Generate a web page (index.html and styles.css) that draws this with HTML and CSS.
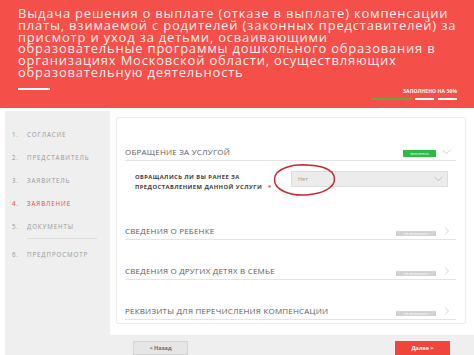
FILE: index.html
```html
<!DOCTYPE html>
<html lang="ru">
<head>
  <meta charset="UTF-8">
  <title>Заявление</title>
  <link rel="stylesheet" href="styles.css">
</head>
<body>

  <!-- Header -->
  <header class="hero">
    <h1>Выдача решения о выплате (отказе в выплате) компенсации<br>платы, взимаемой с родителей (законных представителей) за<br>присмотр и уход за детьми, осваивающими<br>образовательные программы дошкольного образования в<br>организациях Московской области, осуществляющих<br>образовательную деятельность</h1>
    <div class="hero-bottom">
      <div class="hero-line"></div>
      <div class="progress">
        <div class="progress-label">ЗАПОЛНЕНО НА 50%</div>
        <div class="progress-bars">
          <span class="bar done"></span>
          <span class="bar"></span>
          <span class="bar"></span>
        </div>
      </div>
    </div>
  </header>

  <div class="layout">
    <!-- Steps -->
    <aside class="steps">
      <div class="step"><span class="num">1.</span>СОГЛАСИЕ</div>
      <div class="step"><span class="num">2.</span>ПРЕДСТАВИТЕЛЬ</div>
      <div class="step"><span class="num">3.</span>ЗАЯВИТЕЛЬ</div>
      <div class="step active"><span class="num">4.</span>ЗАЯВЛЕНИЕ</div>
      <div class="step"><span class="num">5.</span>ДОКУМЕНТЫ</div>
      <div class="steps-divider"></div>
      <div class="step last"><span class="num">6.</span>ПРЕДПРОСМОТР</div>
    </aside>

    <main class="content">
      <div class="card">
        <div class="section first">
          <div class="section-head">
            <span class="section-title">ОБРАЩЕНИЕ ЗА УСЛУГОЙ</span>
            <span class="badge green">заполнено</span>
            <svg class="chev" width="9" height="6" viewBox="0 0 9 6"><path d="M0.5 1 L4.5 4.5 L8.5 1" fill="none" stroke="#c8c8c8" stroke-width="0.8"/></svg>
          </div>
          <div class="field">
            <div class="field-label">ОБРАЩАЛИСЬ ЛИ ВЫ РАНЕЕ ЗА<br>ПРЕДОСТАВЛЕНИЕМ ДАННОЙ УСЛУГИ <span class="req">*</span></div>
            <div class="select">
              <span>Нет</span>
              <svg width="9" height="6" viewBox="0 0 9 6"><path d="M0.5 1 L4.5 4.5 L8.5 1" fill="none" stroke="#b5b5b5" stroke-width="0.8"/></svg>
            </div>
            <svg class="circle" width="66" height="36" viewBox="0 0 66 36">
              <path d="M40 3.5 C22 1 3 6 2.5 17 C2 28 18 34 34 33 C50 32 63 26 62.5 16.5 C62 7 48 2.5 30 3" fill="none" stroke="#c32a2f" stroke-width="1.5"/>
            </svg>
          </div>
        </div>

        <div class="section">
          <div class="section-head">
            <span class="section-title">СВЕДЕНИЯ О РЕБЕНКЕ</span>
            <span class="badge gray">не заполнено</span>
            <svg class="chev" width="9" height="8" viewBox="0 0 9 8"><path d="M3 0.5 L6.5 4 L3 7.5" fill="none" stroke="#c8c8c8" stroke-width="0.8"/></svg>
          </div>
        </div>

        <div class="section">
          <div class="section-head">
            <span class="section-title">СВЕДЕНИЯ О ДРУГИХ ДЕТЯХ В СЕМЬЕ</span>
            <span class="badge gray">не заполнено</span>
            <svg class="chev" width="9" height="8" viewBox="0 0 9 8"><path d="M3 0.5 L6.5 4 L3 7.5" fill="none" stroke="#c8c8c8" stroke-width="0.8"/></svg>
          </div>
        </div>

        <div class="section">
          <div class="section-head">
            <span class="section-title">РЕКВИЗИТЫ ДЛЯ ПЕРЕЧИСЛЕНИЯ КОМПЕНСАЦИИ</span>
            <span class="badge gray">не заполнено</span>
            <svg class="chev" width="9" height="8" viewBox="0 0 9 8"><path d="M3 0.5 L6.5 4 L3 7.5" fill="none" stroke="#c8c8c8" stroke-width="0.8"/></svg>
          </div>
        </div>
      </div>

      <!-- Navigation -->
      <div class="nav-bar">
        <button class="btn back">&lt; Назад</button>
        <button class="btn next">Далее &gt;</button>
      </div>
    </main>
  </div>

</body>
</html>
```

FILE: styles.css
```css
body {
  margin: 0;
  padding: 0;
  width: 474px;
  height: 355px;
  overflow: hidden;
  background-color: #ffffff;
  font-family: 'Open Sans', 'Liberation Sans', sans-serif;
}

/* Header */
.hero {
  background-color: #f44f48;
  height: 108px;
  box-sizing: border-box;
  padding: 8px 17px 0 18px;
  color: #ffffff;
  overflow: hidden;
}

.hero h1 {
  margin: 0;
  font-size: 12px;
  font-weight: 400;
  line-height: 11.8px;
  letter-spacing: 0.75px;
  white-space: nowrap;
  color: rgba(255, 255, 255, 0.95);
  transform: scaleX(1.08);
  transform-origin: left top;
}

.hero-bottom {
  display: flex;
  justify-content: space-between;
  align-items: flex-start;
  margin-top: 8px;
}

.hero-line {
  width: 32px;
  height: 2px;
  background-color: #ffffff;
  margin-top: 1px;
}

.progress {
  display: flex;
  flex-direction: column;
  align-items: flex-end;
  margin-top: 1px;
}

.progress-label {
  font-size: 5px;
  font-weight: 700;
  letter-spacing: 0.1px;
  line-height: 6px;
}

.progress-bars {
  display: flex;
  gap: 4px;
  margin-top: 4px;
}

.bar {
  display: block;
  width: 19px;
  height: 2px;
  background-color: #ffffff;
}

.bar.done {
  width: 40px;
  background-color: #6fa33f;
}

/* Layout */
.layout {
  display: flex;
  padding: 3px 0 0 5px;
  height: 244px;
}

.steps {
  width: 105px;
  flex-shrink: 0;
  background-color: #efefef;
  padding-top: 12px;
  box-sizing: border-box;
}

.step {
  display: flex;
  align-items: center;
  height: 23px;
  padding-left: 7px;
  font-size: 6.2px;
  letter-spacing: 0.9px;
  color: #959595;
}

.step .num {
  width: 15px;
}

.step.active {
  color: #e8453c;
}

.step.last {
  margin-top: 4px;
}

.steps-divider {
  height: 1px;
  margin: 0 13px 0 22px;
  background-color: #dcdcdc;
}

.content {
  flex: 1;
  display: flex;
  flex-direction: column;
  padding-top: 6px;
}

.card {
  margin: 0 8px 0 6px;
  height: 210px;
  box-sizing: border-box;
  border: 1px solid #ececec;
  border-radius: 2px;
  background-color: #ffffff;
  padding: 25px 9px 0 8px;
}

.section {
  margin-top: 22px;
}

.section.first {
  margin-top: 0;
}

.section-head {
  display: flex;
  align-items: center;
  height: 17px;
  border-bottom: 1px solid #e4e4e4;
  padding-right: 5px;
}

.section-title {
  flex: 1;
  font-size: 8px;
  letter-spacing: 0.2px;
  color: #5a5a5a;
}

.badge {
  font-size: 3.6px;
  color: #ffffff;
  text-align: center;
  margin-top: 6px;
}

.badge.green {
  width: 33px;
  height: 7px;
  line-height: 7px;
  background-color: #2dbb45;
  margin-top: 4px;
}

.badge.gray {
  width: 40px;
  height: 5px;
  line-height: 5px;
  background-color: #d2d2d2;
}

.chev {
  margin-left: 6px;
}

/* Field */
.field {
  position: relative;
  display: flex;
  align-items: flex-start;
  padding: 10px 8px 0 10px;
  height: 29px;
}

.field-label {
  width: 156px;
  font-size: 5.8px;
  font-weight: 700;
  line-height: 10px;
  letter-spacing: 0.45px;
  color: #3a3a3a;
  padding-top: 1px;
}

.req {
  color: #e8453c;
  margin-left: 4px;
}

.select {
  flex: 1;
  height: 16px;
  box-sizing: border-box;
  background-color: #ececec;
  border: 1px solid #dddddd;
  display: flex;
  align-items: center;
  justify-content: space-between;
  padding: 0 4px 0 6px;
  font-size: 5.5px;
  color: #9a9a9a;
}

.circle {
  position: absolute;
  left: 147px;
  top: 1px;
}

/* Bottom navigation */
.nav-bar {
  margin-top: 11px;
  flex: 1;
  background-color: #efefef;
  display: flex;
  justify-content: space-between;
  align-items: flex-start;
  padding: 6px 24px 0 23px;
}

.btn {
  width: 55px;
  height: 14px;
  border: none;
  padding: 0;
  font-family: inherit;
  font-size: 5.5px;
  font-weight: 700;
  cursor: pointer;
}

.btn.back {
  background-color: #e6e6e6;
  border: 1px solid #d4d4d4;
  color: #6a6a6a;
}

.btn.next {
  background-color: #f0453a;
  color: #ffffff;
}
```
